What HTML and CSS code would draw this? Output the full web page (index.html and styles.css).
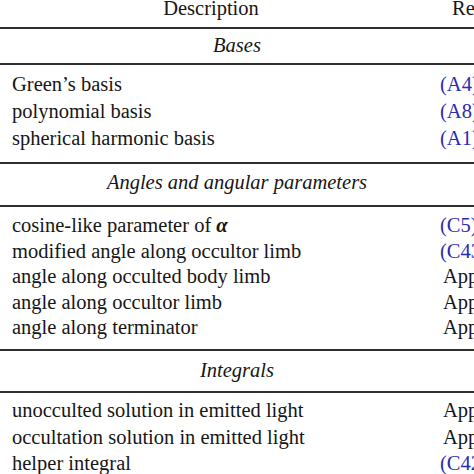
FILE: index.html
```html
<!DOCTYPE html>
<html>
<head>
<meta charset="utf-8">
<link rel="stylesheet" href="styles.css">
</head>
<body>
<div class="table">
  <div class="row head">
    <div class="desc-h">Description</div>
    <div class="ref-h">Ref.</div>
  </div>
  <div class="section s-bases">Bases</div>
  <div class="group g-bases">
    <div class="row"><div class="desc">Green’s basis</div><div class="ref"><span class="link">(A4)</span></div></div>
    <div class="row"><div class="desc">polynomial basis</div><div class="ref"><span class="link">(A8)</span></div></div>
    <div class="row"><div class="desc">spherical harmonic basis</div><div class="ref"><span class="link">(A1)</span></div></div>
  </div>
  <div class="section s-angles">Angles and angular parameters</div>
  <div class="group g-angles">
    <div class="row"><div class="desc">cosine-like parameter of <i class="greek">α</i></div><div class="ref"><span class="link">(C5)</span></div></div>
    <div class="row"><div class="desc">modified angle along occultor limb</div><div class="ref"><span class="link">(C43)</span></div></div>
    <div class="row"><div class="desc">angle along occulted body limb</div><div class="ref app">Appendix C.1</div></div>
    <div class="row"><div class="desc">angle along occultor limb</div><div class="ref app">Appendix C.1</div></div>
    <div class="row"><div class="desc">angle along terminator</div><div class="ref app">Appendix C.2</div></div>
  </div>
  <div class="section s-integrals">Integrals</div>
  <div class="group g-integrals">
    <div class="row"><div class="desc">unocculted solution in emitted light</div><div class="ref app">Appendix C.3</div></div>
    <div class="row"><div class="desc">occultation solution in emitted light</div><div class="ref app">Appendix C.4</div></div>
    <div class="row"><div class="desc">helper integral</div><div class="ref"><span class="link">(C42)</span></div></div>
  </div>
</div>
</body>
</html>
```

FILE: styles.css
```css
html, body {
  margin: 0;
  padding: 0;
  background: #ffffff;
}

body {
  font-family: "Liberation Serif", "Times New Roman", serif;
  font-size: 20.5px;
  color: #161616;
}

.table {
  width: 474px;
  height: 474px;
  overflow: hidden;
}

.row {
  display: grid;
  grid-template-columns: 428px 200px;
  white-space: nowrap;
}

.head {
  grid-template-columns: 422px 200px;
  height: 27px;
  line-height: 16px;
  border-bottom: 2px solid #2e2e2e;
}

.desc-h {
  text-align: center;
}

.ref-h {
  padding-left: 30px;
}

.desc {
  padding-left: 12px;
}

.ref {
  padding-left: 12px;
}

.ref.app {
  padding-left: 15px;
}

.link {
  color: #2a2ab4;
}

.greek {
  font-style: italic;
  font-weight: bold;
}

.section {
  text-align: center;
  font-style: italic;
  line-height: 26px;
  border-bottom: 2px solid #2e2e2e;
}

.group {
  border-bottom: 2px solid #2e2e2e;
}

.s-bases {
  padding: 3px 0 5px;
}

.g-bases {
  padding: 6px 0 10px;
  line-height: 27px;
}

.s-angles {
  padding: 5px 0 10px;
}

.g-angles {
  padding: 6px 0 8.5px;
  line-height: 25.5px;
}

.s-integrals {
  padding: 6px 0 8px;
}

.g-integrals {
  padding: 4px 0 10px;
  line-height: 26.5px;
}
```
